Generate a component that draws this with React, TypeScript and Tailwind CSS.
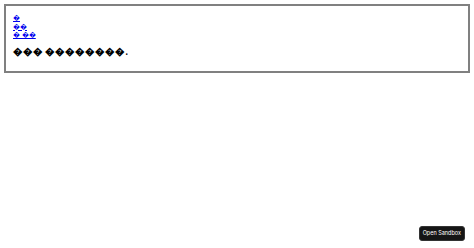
export default function App() {
  return (
    <div className="min-h-[248px] bg-white p-1 font-['Liberation_Serif',serif] text-black">
      <div className="border-2 border-[#808080] px-[7px] pt-[8px] pb-[12px]">
        <nav className="flex flex-col text-[7px] leading-[8.5px]">
          <a href="#" className="text-[#0000ee] underline">{"\uFFFD"}</a>
          <a href="#" className="text-[#0000ee] underline">{"\uFFFD\uFFFD"}</a>
          <a href="#" className="text-[#0000ee] underline">{"\uFFFD \uFFFD\uFFFD"}</a>
        </nav>
        <h2 className="mt-[5px] text-[9.5px] font-bold leading-[14px]">
          {"\uFFFD\uFFFD\uFFFD \uFFFD\uFFFD\uFFFD\uFFFD\uFFFD\uFFFD\uFFFD\uFFFD."}
        </h2>
      </div>
      <button className="fixed bottom-[7px] right-[9px] rounded-[3px] border border-[#333] bg-[#151515] px-[3px] py-[3px] font-['Inter',sans-serif] text-[5.5px] leading-[7px] text-white">
        Open Sandbox
      </button>
    </div>
  );
}
